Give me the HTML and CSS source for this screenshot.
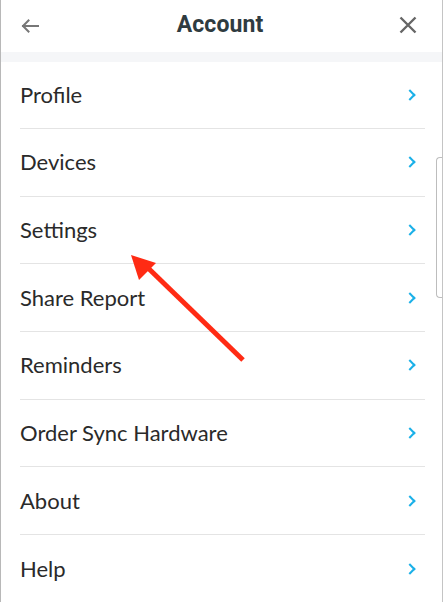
FILE: index.html
```html
<!DOCTYPE html>
<html lang="en">
<head>
    <meta charset="UTF-8">
    <meta name="viewport" content="width=device-width, initial-scale=1.0">
    <title>Account</title>
    <link rel="stylesheet" href="styles.css">
</head>
<body>
    <div class="screen">
        <div class="panel">
            <div class="header">
                <button class="icon-btn back" aria-label="Back">
                    <svg width="18" height="14" viewBox="0 0 18 14">
                        <path d="M17 7H2M7.5 1.5L2 7l5.5 5.5" fill="none" stroke="#777" stroke-width="2" stroke-linecap="square"/>
                    </svg>
                </button>
                <h1>Account</h1>
                <button class="icon-btn close" aria-label="Close">
                    <svg width="18" height="18" viewBox="0 0 18 18">
                        <path d="M1.5 1.5l15 15M16.5 1.5l-15 15" fill="none" stroke="#666" stroke-width="2.4"/>
                    </svg>
                </button>
            </div>
            <div class="band"></div>

            <ul class="menu">
                <li class="menu-item"><span>Profile</span><i class="chevron"></i></li>
                <li class="menu-item"><span>Devices</span><i class="chevron"></i></li>
                <li class="menu-item"><span>Settings</span><i class="chevron"></i></li>
                <li class="menu-item"><span>Share Report</span><i class="chevron"></i></li>
                <li class="menu-item"><span>Reminders</span><i class="chevron"></i></li>
                <li class="menu-item"><span>Order Sync Hardware</span><i class="chevron"></i></li>
                <li class="menu-item"><span>About</span><i class="chevron"></i></li>
                <li class="menu-item"><span>Help</span><i class="chevron"></i></li>
            </ul>
        </div>

        <div class="scroll-edge"></div>

        <!-- annotation arrow -->
        <svg class="annotation" width="444" height="602" viewBox="0 0 444 602">
            <line x1="243" y1="360" x2="146" y2="266" stroke="#ff2b14" stroke-width="5"/>
            <polygon points="131,255 156,263 139,280" fill="#ff2b14"/>
        </svg>
    </div>
</body>
</html>
```

FILE: styles.css
```css
* {
    margin: 0;
    padding: 0;
    box-sizing: border-box;
}

body {
    font-family: 'Lato', 'Open Sans', sans-serif;
    background: #fff;
    width: 444px;
    height: 602px;
    overflow: hidden;
}

.screen {
    position: relative;
    height: 602px;
    border-left: 1px solid #b8b8b8;
    padding-right: 2px;
    background: #fff;
}

.screen::after {
    content: '';
    position: absolute;
    top: 0;
    right: 1px;
    width: 1px;
    height: 100%;
    background: #c4c4c4;
}

.panel {
    background: #fff;
}

.header {
    height: 52px;
    display: flex;
    align-items: center;
    justify-content: space-between;
    padding: 0 25px 0 20px;
}

.header h1 {
    font-family: 'Roboto', sans-serif;
    font-weight: 700;
    font-size: 23px;
    color: #2f3b40;
    letter-spacing: 0.1px;
    padding-left: 2px;
    margin-top: -3px;
}

.icon-btn {
    background: none;
    border: none;
    display: flex;
    align-items: center;
}

.icon-btn.close {
    margin-top: -2px;
}

.band {
    height: 10px;
    background: #f5f6f8;
}

.menu {
    list-style: none;
}

.menu-item {
    height: 67.7px;
    margin: 0 17px 0 19px;
    display: flex;
    align-items: center;
    justify-content: space-between;
    border-bottom: 1px solid #e4e4e4;
    font-size: 22px;
    color: #2a2a2a;
    padding-right: 11px;
}

.menu-item:first-child {
    height: 67px;
}

.menu-item:last-child {
    border-bottom: none;
}

.menu-item span {
    margin-top: -1px;
}

.chevron {
    display: block;
    width: 8px;
    height: 8px;
    border-top: 2.5px solid #1ab0e8;
    border-right: 2.5px solid #1ab0e8;
    transform: rotate(45deg);
}

.scroll-edge {
    position: absolute;
    top: 157px;
    right: 2px;
    width: 6px;
    height: 141px;
    border: 1px solid #bdbdbd;
    border-right: none;
    border-radius: 4px 0 0 4px;
}

.annotation {
    position: absolute;
    top: 0;
    left: -1px;
    pointer-events: none;
}
```
